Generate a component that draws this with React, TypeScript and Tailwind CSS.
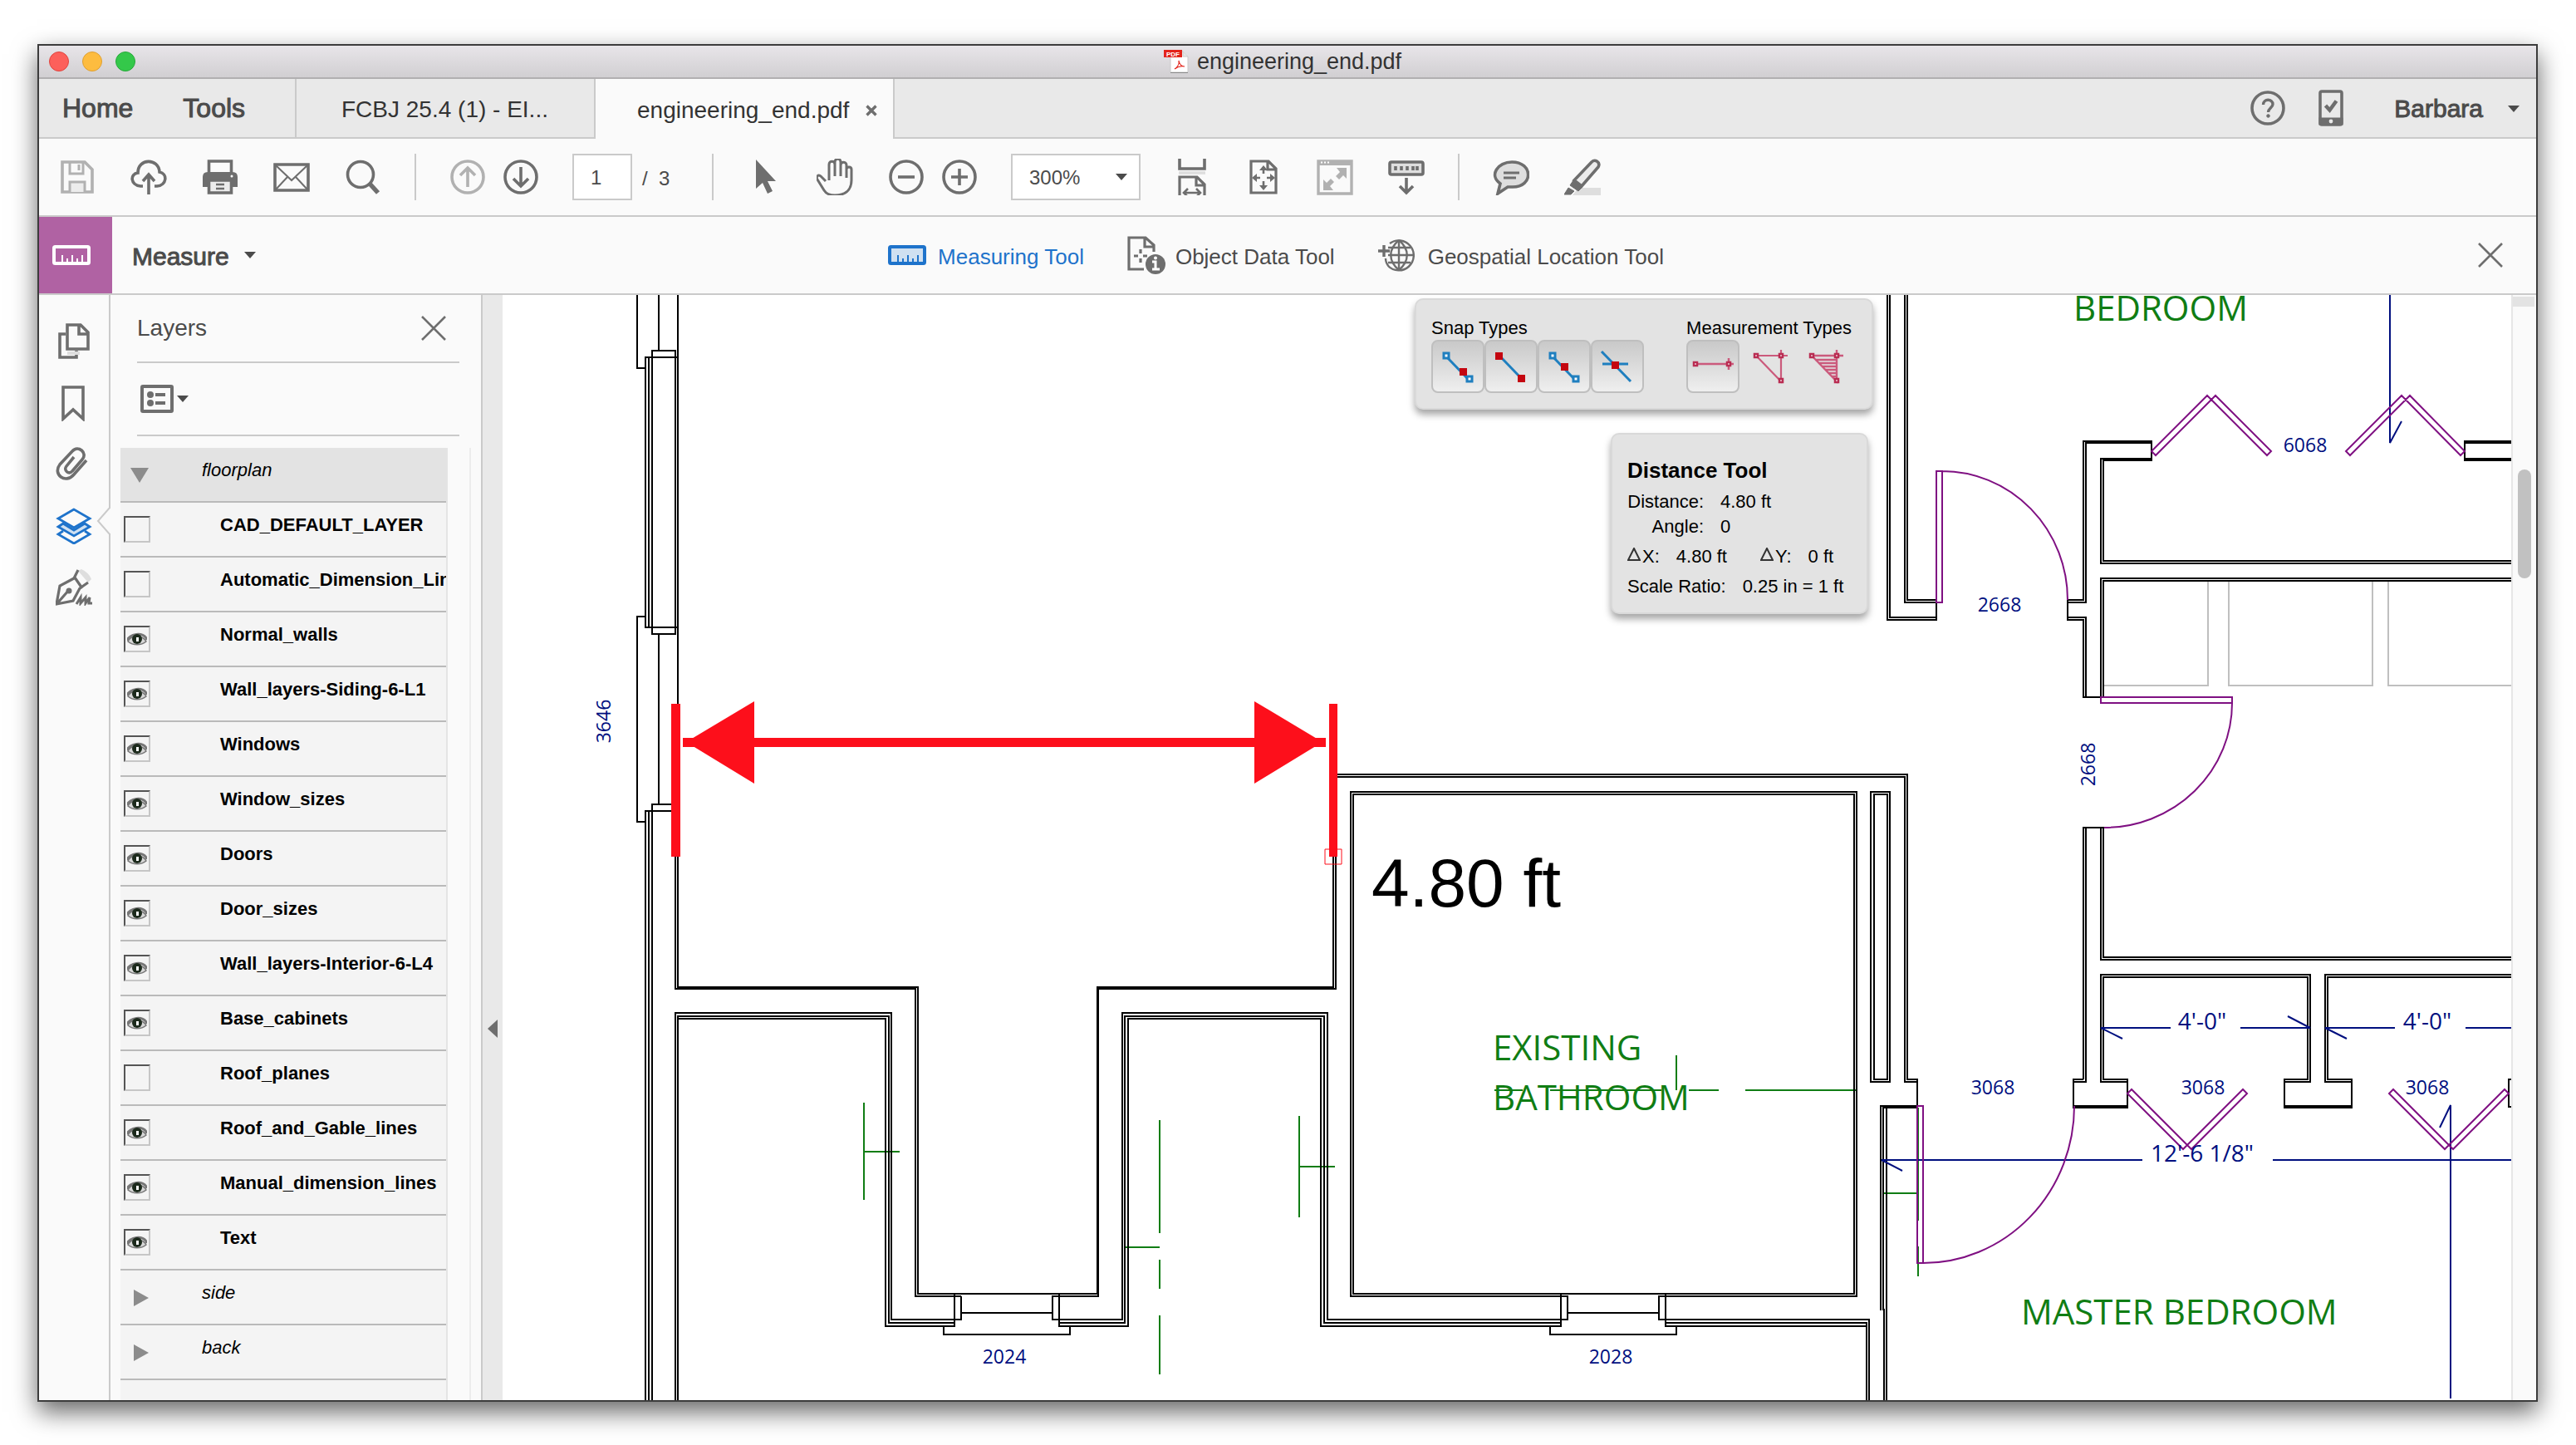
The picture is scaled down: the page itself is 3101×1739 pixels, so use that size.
import { useState } from "react";
import type { ReactNode } from "react";

interface Layer {
  name: string;
  visible: boolean;
}

const INITIAL_LAYERS: Layer[] = [
  { name: "CAD_DEFAULT_LAYER", visible: false },
  { name: "Automatic_Dimension_Lin", visible: false },
  { name: "Normal_walls", visible: true },
  { name: "Wall_layers-Siding-6-L1", visible: true },
  { name: "Windows", visible: true },
  { name: "Window_sizes", visible: true },
  { name: "Doors", visible: true },
  { name: "Door_sizes", visible: true },
  { name: "Wall_layers-Interior-6-L4", visible: true },
  { name: "Base_cabinets", visible: true },
  { name: "Roof_planes", visible: false },
  { name: "Roof_and_Gable_lines", visible: true },
  { name: "Manual_dimension_lines", visible: true },
  { name: "Text", visible: true },
];

function Icon({ children, faded }: { children: ReactNode; faded?: boolean }) {
  return (
    <svg
      viewBox="0 0 44 44"
      className={faded ? "size-11 text-[#b1b1b1]" : "size-11 text-[#6e6e6e]"}
      fill="none"
      stroke="currentColor"
      strokeWidth={3.6}
    >
      {children}
    </svg>
  );
}

function IconButton({ label, faded, children }: { label: string; faded?: boolean; children: ReactNode }) {
  return (
    <button aria-label={label} className="size-11 shrink-0">
      <Icon faded={faded}>{children}</Icon>
    </button>
  );
}

function Caret({ className }: { className?: string }) {
  return (
    <svg viewBox="0 0 14 8" className={`h-2 w-3.5 fill-[#4b4b4b] ${className ?? ""}`}>
      <path d="M0 0h14l-7 8z" />
    </svg>
  );
}

function Cross() {
  return (
    <svg viewBox="0 0 30 30" className="size-[30px]" fill="none" stroke="#6e6e6e" strokeWidth={2.6}>
      <path d="M1 1l28 28M29 1L1 29" />
    </svg>
  );
}

function Ruler({ className }: { className: string }) {
  return (
    <svg viewBox="0 0 46 24" className={`h-6 w-[46px] ${className}`} stroke="currentColor">
      <rect x="2" y="2" width="42" height="20" rx="1.5" strokeWidth={4} />
      <path fill="none" d="M12 20v-8M18 20v-4M24 20v-8M30 20v-4M36 20v-8" strokeWidth={2} />
    </svg>
  );
}

function Divider() {
  return <div className="mx-10 h-14 w-0.5 shrink-0 bg-[#cacaca]" />;
}

function TitleBar() {
  return (
    <div className="flex h-10 shrink-0 items-center border-b-2 border-[#b1afb1] bg-gradient-to-b from-[#e8e5e9] to-[#d1cfd2] px-3">
      <div className="flex w-[120px] gap-4">
        <button aria-label="Close" className="size-6 rounded-full border border-[#e0443e] bg-[#fc605b]" />
        <button aria-label="Minimize" className="size-6 rounded-full border border-[#dfa032] bg-[#fdbc40]" />
        <button aria-label="Zoom" className="size-6 rounded-full border border-[#27a93a] bg-[#34c84a]" />
      </div>
      <div className="flex flex-1 items-center justify-center gap-2.5">
        <svg viewBox="0 0 30 28" className="h-7 w-[30px]">
          <path d="M8 2h15l6 6v19H8z" fill="#fff" stroke="#c9c9c9" />
          <path d="M23 2v6h6" fill="#e5e5e5" stroke="#c9c9c9" />
          <path d="M8 27.5h21" stroke="#8a8a8a" />
          <rect width="22" height="9" fill="#e3241b" />
          <text x="11" y="7.5" textAnchor="middle" fontSize="8" fontWeight="700" fill="#fff" fontFamily="Liberation Sans, sans-serif">PDF</text>
          <path d="M13 23c3-2 6-6 5-10 1 5 3 7 7 7-4-1-8 0-12 3z" fill="none" stroke="#e3241b" strokeWidth={1.2} />
        </svg>
        <h1 className="text-[27px] leading-8 text-[#333]">engineering_end.pdf</h1>
      </div>
      <div className="w-[132px]" />
    </div>
  );
}

function TabBar() {
  return (
    <div className="flex h-[72px] shrink-0 bg-[#e9e9e9] text-[28px] leading-8 text-[#333]">
      <nav className="flex w-[310px] shrink-0 items-center gap-[60px] border-r-2 border-b-2 border-[#cacaca] pr-10 pl-7 text-[32px] text-[#4b4b4b] [-webkit-text-stroke:1px_#4b4b4b]">
        <a href="#home">Home</a>
        <a href="#tools">Tools</a>
      </nav>
      <button className="flex w-[360px] shrink-0 items-center border-r-2 border-b-2 border-[#cacaca] pt-1 pl-[54px] text-left">
        FCBJ 25.4 (1) - EI...
      </button>
      <div className="flex w-[360px] shrink-0 items-center border-r-2 border-[#cacaca] bg-[#fafafa] pt-1 pl-[50px]">
        <button>engineering_end.pdf</button>
        <button aria-label="Close tab" className="ml-5">
          <svg viewBox="0 0 14 14" className="size-3.5" stroke="#6e6e6e" strokeWidth={3.4}>
            <path d="M1.500 1.500l11 11M12.500 1.500l-11 11" />
          </svg>
        </button>
      </div>
      <div className="flex flex-1 items-center justify-end border-b-2 border-[#cacaca] pr-5">
        <IconButton label="Help">
          <circle cx="22" cy="22" r="19" />
          <path d="M16.500 18c0-7.500 11.500-7.500 11.500-.5 0 4-5.500 4.500-5.500 9.500" strokeWidth={3.400} />
          <circle cx="22.500" cy="31.500" r="1.800" fill="currentColor" strokeWidth={1} />
        </IconButton>
        <button aria-label="Mobile link" className="ml-8">
          <Icon>
            <rect x="9" y="2" width="26" height="40" rx="2" />
            <path d="M9 35h26v6H9z" fill="currentColor" strokeWidth={3} />
            <circle cx="22" cy="38" r="2.400" fill="#e9e9e9" stroke="none" />
            <path d="M15.500 19l5 5.500 8-11" strokeWidth={4.500} />
          </Icon>
        </button>
        <button className="ml-[54px] flex items-center gap-[30px] pt-0.5 text-[30px] text-[#4b4b4b] [-webkit-text-stroke:1px_#4b4b4b]">
          Barbara
          <Caret />
        </button>
      </div>
    </div>
  );
}

function Toolbar() {
  return (
    <div className="flex h-[94px] shrink-0 items-center border-b-2 border-[#cacaca] pl-6 text-2xl text-[#4b4b4b]">
      <div className="flex gap-[42px]">
        <IconButton label="Save" faded>
          <path d="M4 4h27l9 9v27H4z" />
          <path d="M13 4v14h16V4M24 7v7" strokeWidth={3} />
          <path d="M13 40V28h18v12" fill="#ececec" strokeWidth={3} />
        </IconButton>
        <IconButton label="Upload">
          <path d="M15 33h-3C0 32-1 18 9 17 9-1 34-1 35 16c10 2 9 16-3 17h-3" />
          <path d="M22 43V21M15 27l7-8 7 8" />
        </IconButton>
        <IconButton label="Print">
          <path d="M7 16h30q6 0 6 6v12h-6v-8H7v8H1V22q0-6 6-6z" fill="currentColor" stroke="none" />
          <path d="M8.500 16V3h27v13" />
          <path d="M8.500 26h27v15h-27z" fill="#ececec" />
          <path d="M17 31h10M17 36h10" strokeWidth={2.500} />
          <circle cx="36" cy="21" r="1.500" fill="#fff" stroke="none" />
        </IconButton>
        <IconButton label="Email">
          <path d="M2 7h40v31H2z" />
          <path d="M3 8l19 18L41 8M3 37l14-15M41 37L27 22" strokeWidth={2} />
        </IconButton>
        <IconButton label="Search">
          <circle cx="19" cy="19" r="15.500" />
          <path d="M30 30l10 11" strokeWidth={5.500} />
        </IconButton>
      </div>
      <Divider />
      <div className="flex gap-5">
        <IconButton label="Previous page" faded>
          <circle cx="22" cy="22" r="19" />
          <path d="M22 34V12M13 20l9-9 9 9" />
        </IconButton>
        <IconButton label="Next page">
          <circle cx="22" cy="22" r="19" />
          <path d="M22 10v22M13 24l9 9 9-9" />
        </IconButton>
      </div>
      <input
        aria-label="Page number"
        defaultValue="1"
        className="ml-10 h-14 w-[72px] shrink-0 border-2 border-[#cacaca] bg-white pt-0.5 pl-5 text-[#4b4b4b] outline-none"
      />
      <span className="ml-3 w-11 shrink-0 pt-1 whitespace-pre">/  3</span>
      <Divider />
      <IconButton label="Select">
        <path d="M11 1v35l8-7 6 13 6-3-6-12h10z" fill="currentColor" stroke="none" />
      </IconButton>
      <button aria-label="Hand" className="ml-10 size-11 shrink-0">
        <Icon>
          <path
            d="M11 27L5 21c-3-3-6 1-4 4l8 13c3 5 7 6 13 6 12 0 20-6 20-18V13c0-4-6-4-6 0v10V8c0-5-7-5-7 0v13V4c0-5-7-5-7 0v17V7c0-5-7-5-7 0v19"
            strokeWidth={3}
          />
        </Icon>
      </button>
      <div className="ml-[42px] flex gap-5">
        <IconButton label="Zoom out">
          <circle cx="22" cy="22" r="19" />
          <path d="M12 22h20" />
        </IconButton>
        <IconButton label="Zoom in">
          <circle cx="22" cy="22" r="19" />
          <path d="M12 22h20M22 12v20" />
        </IconButton>
      </div>
      <div className="ml-10 grid shrink-0 items-center">
        <select
          aria-label="Zoom level"
          className="col-start-1 row-start-1 h-14 w-[156px] appearance-none border-2 border-[#cacaca] bg-white pt-0.5 pl-5 text-[#4b4b4b] outline-none"
        >
          <option>300%</option>
        </select>
        <Caret className="pointer-events-none col-start-1 row-start-1 mr-4 justify-self-end" />
      </div>
      <div className="ml-10 flex gap-[42px]">
        <IconButton label="Fit width">
          <path d="M7 -2v14h30V-2" />
          <path d="M6 17h32" stroke="#dedede" />
          <path d="M7 46V22h21l9 9v15M27 22v10h10" strokeWidth={3.200} />
          <path d="M12 41h20M17 36l-5 5 5 5M27 36l5 5-5 5" strokeWidth={2.600} />
        </IconButton>
        <IconButton label="Fit page">
          <path d="M7 3h21l9 9v29H7zM27 3v10h10" strokeWidth={3.200} />
          <path d="M22 10v8M22 27v8M10 23h8M26 23h8" strokeWidth={2.600} />
          <path d="M22 8l5 6H17zM22 38l5-6H17zM8 23l6-5v10zM36 23l-6-5v10z" fill="currentColor" stroke="none" />
        </IconButton>
        <IconButton label="Full screen" faded>
          <path d="M2 3h40v39H2z" strokeWidth={3.400} />
          <path d="M1 2h42v6H1z" fill="currentColor" stroke="none" />
          <path d="M5 4.500h12" stroke="#fff" strokeWidth={2} strokeDasharray="2 2" />
          <path d="M36 11v13l-4-4-5 5-4-4 5-5-4-5zM8 38V25l4 4 5-5 4 4-5 5 4 5z" fill="currentColor" stroke="none" />
        </IconButton>
        <IconButton label="Read mode">
          <rect x="2" y="4" width="40" height="15" rx="2" fill="#dedede" />
          <path d="M9 9v5M16 9v5M23 9v5M30 9v5M35 9v5" />
          <path d="M22 23v18M14 33l8 8 8-8" />
        </IconButton>
      </div>
      <Divider />
      <div className="flex gap-[42px]">
        <IconButton label="Comment">
          <path d="M23 4c26 0 26 30 1 30h-6l-12 8 3-12C-5 20 6 4 23 4z" fill="#dedede" />
          <path d="M13 17h19M13 23h15" strokeWidth={3} />
        </IconButton>
        <IconButton label="Highlight">
          <path d="M17 35h27v9H10z" fill="#dedede" stroke="none" />
          <path d="M12 26L33 4c4-4 11 0 8 6L21 33z" fill="#ececec" />
          <path d="M11 26l11 8-5 5-10-7zM5 35l7 4-4 4H0z" fill="currentColor" strokeWidth={1} />
        </IconButton>
      </div>
    </div>
  );
}

function MeasureBar() {
  return (
    <div className="flex h-[94px] shrink-0 items-center border-b-2 border-[#cacaca] text-[26px] leading-8 text-[#4b4b4b]">
      <div className="flex w-[340px] shrink-0 items-center">
        <div className="flex h-[92px] w-[88px] items-center bg-[#b062a3] pl-4">
          <Ruler className="fill-none text-white" />
        </div>
        <button className="ml-6 flex items-center gap-[18px] pt-1 text-[30px] [-webkit-text-stroke:1px_#4b4b4b]">
          Measure
          <Caret className="mb-1" />
        </button>
      </div>
      <div className="flex flex-1 items-center justify-center gap-[52px]">
        <button className="flex items-center gap-[14px] text-[#1e73cb]">
          <Ruler className="fill-[#cfe0f1]" />
          <span className="pt-1">Measuring Tool</span>
        </button>
        <button className="flex items-center gap-3">
          <svg viewBox="0 0 46 46" className="size-[46px] text-[#6e6e6e]" fill="none" stroke="currentColor" strokeWidth={3.2}>
            <path d="M20 40H2V2h20l10 9v8M21 2v11h11" />
            <path d="M16 16v5M16 27v5M8 24h5M19 24h5" />
            <circle cx="34" cy="34" r="12" fill="currentColor" stroke="none" />
            <path d="M30 31h4v9M30 40h9" stroke="#fff" strokeWidth={3} />
            <circle cx="34" cy="26.500" r="2" fill="#fff" stroke="none" />
          </svg>
          <span className="pt-1">Object Data Tool</span>
        </button>
        <button className="flex items-center gap-4">
          <svg viewBox="0 0 44 40" className="h-10 w-11 text-[#6e6e6e]" fill="none" stroke="currentColor" strokeWidth={2.4}>
            <path d="M14 6a18 18 0 1 1-2 27M9 24q0 6 5 11" />
            <path d="M25 2v36M12 20h31M12 11h27M12 29h27" />
            <path d="M25 2c-13 11-13 25 0 36M25 2c13 11 13 25 0 36" />
            <path d="M0 15h14M7 8v14" strokeWidth={3.400} />
          </svg>
          <span className="pt-1">Geospatial Location Tool</span>
        </button>
      </div>
      <div className="flex w-[368px] shrink-0 justify-end pr-10">
        <button aria-label="Close Measure">
          <Cross />
        </button>
      </div>
    </div>
  );
}

function NavStrip() {
  return (
    <nav className="flex w-[86px] shrink-0 flex-col items-center gap-[30px] border-r-2 border-[#cacaca] pt-[34px]">
      <IconButton label="Page thumbnails">
        <path d="M12 13H5v28h20v-8" />
        <path d="M14 34h15v4H14z" fill="#dedede" stroke="none" />
        <path d="M14 2h16l9 9v20H14zM28 2v11h11" />
      </IconButton>
      <IconButton label="Bookmarks">
        <path d="M9 3h24v38L21 30 9 41z" />
      </IconButton>
      <IconButton label="Attachments">
        <path d="M37 17L22 34C12 46-4 34 5 22L20 6c7-8 19 2 12 10L20 30c-4 5-11-1-7-6l9-11" />
      </IconButton>
      <div className="relative flex w-full justify-center text-[#1e73cb]">
        <button aria-label="Layers">
          <svg viewBox="0 0 44 44" className="size-11" fill="none" stroke="currentColor" strokeWidth={2.8}>
            <path d="M9 28l-6 4 19 11 19-11-6-4" />
            <path d="M9 19l-6 4 19 11 19-11-6-4-13 8z" fill="#cfe0f1" />
            <path d="M22 2L3 13l19 11 19-11z" fill="#fafafa" />
          </svg>
        </button>
        <svg viewBox="0 0 17 32" className="absolute top-0 -right-0.5 h-8 w-[17px]">
          <path d="M17 1v30h-2L2 16 15 1z" fill="#fafafa" />
          <path d="M16 0L2 16l14 16" fill="none" stroke="#cacaca" strokeWidth={2} />
        </svg>
      </div>
      <IconButton label="Signatures">
        <path d="M27 2l12 14 4-4Q40 4 31 0z" fill="#dedede" stroke="none" />
        <path d="M27 1l-5 10L5 20 1 42l20-4 8-15 10-7M23 10l9 13M2 41l14-16" strokeWidth={3.200} />
        <circle cx="16" cy="26" r="3.500" fill="currentColor" stroke="none" />
        <path d="M25 42l5-8v7l6-7v7l5-7-1 7h4" strokeWidth={3} />
      </IconButton>
    </nav>
  );
}

function Eye() {
  return (
    <svg viewBox="0 0 24 16" className="pointer-events-none col-start-1 row-start-1 hidden h-4 w-6 justify-self-center peer-checked:block">
      <path d="M0 10C2 2 20-2 24 9" fill="none" stroke="#777" strokeWidth={3} />
      <path d="M1 11C4 4 18 2 23 11 17 16 7 16 1 11z" fill="#d8d8d8" stroke="#777" strokeWidth={1.5} />
      <circle cx="12" cy="8" r="6" fill="#1c2a1c" />
      <rect x="11" y="6" width="3" height="5" fill="#fff" />
    </svg>
  );
}

function GroupRow({ name, open }: { name: string; open?: boolean }) {
  return (
    <button
      className={`flex h-[66px] w-full shrink-0 border-b-2 border-[#bababa] pl-3 text-left italic ${open ? "bg-[#e3e3e3]" : "bg-[#f4f4f4]"}`}
    >
      <svg viewBox="0 0 22 20" className="mt-[23px] h-5 w-[22px] fill-[#8c8c8c]">
        <path d={open ? "M0 1h22L11 19z" : "M4 0v20l18-10z"} />
      </svg>
      <span className="mt-[15px] ml-16">{name}</span>
    </button>
  );
}

function LayersPanel() {
  const [layers, setLayers] = useState(INITIAL_LAYERS);

  const toggle = (name: string) =>
    setLayers((prev) => prev.map((l) => (l.name === name ? { ...l, visible: !l.visible } : l)));

  return (
    <aside className="flex w-[448px] shrink-0 flex-col border-r-2 border-[#cacaca] pr-3 pl-3">
      <div className="mr-3.5 ml-5 flex h-[82px] shrink-0 items-center justify-between border-b-2 border-[#cacaca] pr-4">
        <h2 className="text-[28px] leading-8 text-[#4b4b4b]">Layers</h2>
        <button aria-label="Close Layers">
          <Cross />
        </button>
      </div>
      <div className="mr-3.5 mb-3.5 ml-5 flex h-[88px] shrink-0 items-center border-b-2 border-[#cacaca] pl-1">
        <button aria-label="Layer options" className="flex items-center gap-1">
          <svg viewBox="0 0 40 34" className="h-[34px] w-10 text-[#6e6e6e]" fill="none" stroke="currentColor" strokeWidth={4}>
            <rect x="2" y="2" width="36" height="30" rx="1" />
            <path d="M18 12h12M18 22h12" />
            <circle cx="12" cy="12" r="4" fill="currentColor" stroke="none" />
            <circle cx="12" cy="22" r="4" fill="currentColor" stroke="none" />
          </svg>
          <Caret />
        </button>
      </div>
      <div className="flex min-h-0 flex-1 border-r-2 border-[#ececec] pr-[26px] text-[22px] leading-6 text-black">
        <div className="flex w-[394px] flex-col overflow-hidden border-r-2 border-[#e4e4e4] bg-[#f4f4f4]">
          <GroupRow name="floorplan" open />
          {layers.map((layer) => (
            <div key={layer.name} className="flex h-[66px] shrink-0 border-b-2 border-[#bababa] pl-1">
              <div className="mt-4 grid size-8 shrink-0 items-center">
                <input
                  id={layer.name}
                  type="checkbox"
                  checked={layer.visible}
                  onChange={() => toggle(layer.name)}
                  className="peer col-start-1 row-start-1 size-8 appearance-none border-2 border-t-[#555] border-r-[#c6c6c6] border-b-[#c6c6c6] border-l-[#555]"
                />
                <Eye />
              </div>
              <label htmlFor={layer.name} className="mt-[15px] ml-[84px] font-bold">
                {layer.name}
              </label>
            </div>
          ))}
          <GroupRow name="side" />
          <GroupRow name="back" />
        </div>
      </div>
    </aside>
  );
}

const WALLS = [
  // west wall and its windows
  "M767 355V443H777M793 355V422M816 355V1188H1105V1557H1321V1188H1605V935",
  "M777 430V755M781 430V755M785 422V763H813V422H784M776 430H817M776 755H817",
  "M777 742H767V989H777M793 763V968M785 1685V968H813V1190H1102V1560H1157M777 1685V976H816M781 976V1685",
  // alcove
  "M813 1685V1219H1073V1588H1157V1560M816 1685V1223H1070V1592H1149M816 1226H1066V1596H1149V1557",
  "M1157 1580H1267M1136 1596V1606H1288V1596",
  "M1322 1190V1560H1267V1588H1351V1219H1598V1588H1887V1560H1626V953H2235V1560H1997V1588H2250V1685",
  "M1320 1190H1608V932M1275 1557V1596H1358V1226H1590V1596H1879V1557",
  "M1275 1592H1354V1223H1594V1592H1879M2005 1592H2247V1685M2247 1596H2005V1557",
  // bathroom
  "M1629 956H2232V1557H1629zM1887 1580H1997M1866 1596V1606H2018V1596",
  "M1608 932H2296V1299H2308M1608 935H2293V1302H2308M2308 1298V1333M2252 953H2275V1302H2252zM2256 956H2272V1299H2256z",
  "M2264 1577V1331H2308M2267 1577V1333H2308M2271 1333V1685M2268 1575V1685",
  // hall
  "M2272 355V746H2331V722H2296V355M2275 355V743H2331M2293 355V725H2331",
  "M2590 531H2508V722H2489V746H2508V839H2532M2590 533H2511V725H2489M2489 743H2511V839M2590 530V555",
  "M2590 552H2529V678H3023M2590 554H2532V675H3023M3023 696H2529V839M3023 699H2532V839",
  "M3023 531H2967V554H3023M3023 533H2967M3023 552H2967",
  // closets
  "M2508 1299V996H2532V1152H3023M2511 996V1302H2496M2529 996V1155H3023M2508 1299H2496V1333H2561V1299H2532V1176H2778V1299H2750V1333H2831V1299H2802V1176H3023",
  "M2561 1302H2529V1173H2781V1302H2750M2831 1302H2799V1173H3023M2496 1331H2561M2750 1331H2831M3023 1299H3020V1332H3023",
].join("");

const NOTES = [
  "M1040 1327V1444M1040 1386H1083M1396 1348V1484M1396 1516V1551M1396 1583V1654M1355 1501H1396M1564 1343V1465M1564 1404H1607",
  "M1799 1312H1833M1866 1312H2000M2033 1312H2069M2101 1312H2236M2018 1270V1312M2267 1436H2307M2309 1333V1469M2309 1500V1536",
].join("");

const DOORS = [
  "M2331 567H2338V725H2331zM2338 567A151 155 0 0 1 2489 722",
  "M2529 839H2687V846H2529zM2687 846A154 150 0 0 1 2533 996",
  "M2308 1331H2315V1520H2308zM2497 1331A182 189 0 0 1 2315 1520",
  "M2657 476L2590 543L2595 548L2667 476L2734 543L2729 548z",
  "M2891 476L2824 543L2829 548L2901 476L2967 543L2962 548z",
  "M2566 1311L2561 1316L2628 1383L2700 1311L2705 1316L2638 1383z",
  "M2881 1311L2876 1316L2943 1383L3015 1311L3020 1316L2953 1383z",
].join("");

const DIMENSIONS = [
  "M2877 355V533L2891 507M2613 1237H2529L2555 1250M2697 1237H2781L2754 1223M2883 1237H2799L2825 1250M2968 1237H3023",
  "M2579 1396H2265L2290 1409M2736 1396H3023M2950 1683V1330L2937 1357",
].join("");

const SIZE_LABELS = [
  { text: "2024", x: 1209, y: 1641 },
  { text: "2028", x: 1939, y: 1641 },
  { text: "6068", x: 2775, y: 544 },
  { text: "2668", x: 2407, y: 736 },
  { text: "3068", x: 2399, y: 1317 },
  { text: "3068", x: 2652, y: 1317 },
  { text: "3068", x: 2922, y: 1317 },
];

function FloorPlan() {
  return (
    <svg
      viewBox="605 355 2418 1330"
      className="block h-[1330px] w-[2418px] font-['Open_Sans','Noto_Sans',sans-serif]"
      fill="none"
      strokeWidth={2}
    >
      <path d="M2533 825H2658V700M2683 700V825H2856V700M2875 700V825H3023" stroke="#bfbfbf" />
      <path d={NOTES} stroke="#107d14" />
      <path d={WALLS} stroke="#000" />
      <path d={DIMENSIONS} stroke="#000f7f" />
      <path d={DOORS} stroke="#7f1082" />

      <g fill="#107d14" fontSize={42}>
        <text x="2496" y="386">BEDROOM</text>
        <text x="1797" y="1276">EXISTING</text>
        <text x="1797" y="1336">BATHROOM</text>
        <text x="2433" y="1594">MASTER BEDROOM</text>
      </g>
      <g fill="#000f7f" fontSize={23} textAnchor="middle">
        {SIZE_LABELS.map((l) => (
          <text key={`${l.x}-${l.y}`} x={l.x} y={l.y}>{l.text}</text>
        ))}
        <text transform="translate(2522 920) rotate(-90)">2668</text>
        <text transform="translate(735 868) rotate(-90)">3646</text>
      </g>
      <g fill="#000f7f" fontSize={28} textAnchor="middle">
        <text x="2651" y="1239">4'-0"</text>
        <text x="2922" y="1239">4'-0"</text>
        <text x="2651" y="1398">12'-6 1/8"</text>
      </g>

      {/* measured distance */}
      <g fill="#fd0f1b">
        <path d="M808 847h11v184h-11zM1600 847h10v184h-10zM822 888h774v11H822z" />
        <path d="M826 893L908 844V943zM1592 893L1510 844V943z" />
        <path d="M1595 1022h20v18h-20z" fill="none" stroke="#fd0f1b" strokeWidth={1} />
      </g>
      <text x="1651" y="1091" fontSize={82} fill="#000" fontFamily="Liberation Sans, Arial, sans-serif">4.80 ft</text>
    </svg>
  );
}

function ToolChoice({ label, active, children }: { label: string; active?: boolean; children: ReactNode }) {
  return (
    <button
      aria-label={label}
      className={`size-16 rounded-lg ${active ? "border-2 border-[#bfbfbf] bg-gradient-to-b from-[#c9c9c9] to-[#efefef]" : "border-2 border-transparent"}`}
    >
      <svg viewBox="0 0 60 60" className="size-full" fill="none" strokeWidth={3}>
        {children}
      </svg>
    </button>
  );
}

function SnapPanel() {
  return (
    <div className="absolute top-1 right-[768px] flex h-[134px] w-[552px] justify-between rounded-[10px] border-2 border-[#d9d9d9] bg-[#e3e3e3] px-[18px] pt-5 text-[22px] leading-7 text-black shadow-[0_6px_8px_rgba(0,0,0,0.35)]">
      <div>
        <p>Snap Types</p>
        <div className="flex">
          <ToolChoice label="Snap to paths" active>
            <path d="M16 18l26 27" stroke="#1f7fbf" />
            <path d="M13 14h6v6h-6zM41 42h6v6h-6z" fill="#fff" stroke="#1f7fbf" />
            <path d="M32 32h9v9h-9z" fill="#c40610" />
          </ToolChoice>
          <ToolChoice label="Snap to endpoints" active>
            <path d="M16 17l26 27" stroke="#1f7fbf" />
            <path d="M11 13h9v9h-9zM38 40h9v9h-9z" fill="#c40610" />
          </ToolChoice>
          <ToolChoice label="Snap to midpoints" active>
            <path d="M16 18l26 27" stroke="#1f7fbf" />
            <path d="M13 14h6v6h-6zM41 42h6v6h-6z" fill="#fff" stroke="#1f7fbf" />
            <path d="M26 26h9v9h-9z" fill="#c40610" />
          </ToolChoice>
          <ToolChoice label="Snap to intersections" active>
            <path d="M11 12l35 36M12 27h31" stroke="#1f7fbf" />
            <path d="M23 24h9v9h-9z" fill="#c40610" />
          </ToolChoice>
        </div>
      </div>
      <div className="pr-1.5">
        <p>Measurement Types</p>
        <div className="flex gap-0.5">
          <ToolChoice label="Distance" active>
            <path d="M9 27h46M49 20v14" stroke="#cb5a7c" strokeWidth={2.500} />
            <path d="M7 25h4v4H7zM47 25h4v4h-4z" fill="#fff" stroke="#b92c52" strokeWidth={2.500} />
          </ToolChoice>
          <ToolChoice label="Perimeter">
            <path d="M16 17h38M46 10v38L16 17" stroke="#cb5a7c" strokeWidth={2.200} />
            <path d="M14 15h4v4h-4zM44 15h4v4h-4zM44 45h4v4h-4z" fill="#fff" stroke="#b92c52" strokeWidth={2.500} />
          </ToolChoice>
          <ToolChoice label="Area">
            <path d="M17 17h38M47 10v38L17 17M21 22h26M25 26h22M29 30h18M33 34h14M37 38h10M41 42h6" stroke="#cb5a7c" strokeWidth={2.400} />
            <path d="M15 15h4v4h-4zM45 15h4v4h-4zM45 45h4v4h-4z" fill="#fff" stroke="#b92c52" strokeWidth={2.500} />
          </ToolChoice>
        </div>
      </div>
    </div>
  );
}

function Delta() {
  return (
    <svg viewBox="0 0 16 16" className="mt-1 mr-0.5 size-4" fill="none" stroke="#333" strokeWidth={2}>
      <path d="M8 1l7 14H1z" />
    </svg>
  );
}

function DistancePanel() {
  return (
    <div className="absolute top-[166px] right-[774px] h-[218px] w-[310px] rounded-[10px] border-2 border-[#d9d9d9] bg-[#e3e3e3] px-[18px] pt-7 text-[22px] leading-[30px] whitespace-nowrap text-black shadow-[0_6px_8px_rgba(0,0,0,0.35)]">
      <h2 className="text-[26px] leading-[30px] font-bold">Distance Tool</h2>
      <p className="mt-2 flex gap-5">
        <span className="w-[92px] text-right">Distance:</span>
        <span>4.80 ft</span>
      </p>
      <p className="flex gap-5">
        <span className="w-[92px] text-right">Angle:</span>
        <span>0</span>
      </p>
      <div className="mt-1.5 flex">
        <Delta />
        <span>X:</span>
        <span className="mr-10 ml-5">4.80 ft</span>
        <Delta />
        <span>Y:</span>
        <span className="ml-5">0 ft</span>
      </div>
      <p className="mt-1.5 flex gap-5">
        <span>Scale Ratio:</span>
        <span>0.25 in = 1 ft</span>
      </p>
    </div>
  );
}

export default function App() {
  return (
    <div className="flex h-screen flex-col bg-white pt-[53px] pr-[46px] pb-[52px] pl-[45px] font-['Liberation_Sans',Arial,sans-serif]">
      <div className="flex min-h-0 flex-1 flex-col overflow-hidden border-2 border-[#3c3c3c] bg-[#fafafa] shadow-[0_12px_28px_rgba(0,0,0,0.6)]">
        <TitleBar />
        <TabBar />
        <Toolbar />
        <MeasureBar />
        <div className="flex min-h-0 flex-1">
          <NavStrip />
          <LayersPanel />
          <div className="flex w-6 shrink-0 flex-col items-center bg-[#e9e9e9]">
            <div className="grow-2" />
            <button aria-label="Collapse panel">
              <svg viewBox="0 0 12 22" className="h-[22px] w-3 fill-[#6e6e6e]">
                <path d="M12 0v22L0 11z" />
              </svg>
            </button>
            <div className="grow" />
          </div>
          <main className="relative min-w-0 flex-1 overflow-hidden bg-white">
            <FloorPlan />
            <SnapPanel />
            <DistancePanel />
          </main>
          <div className="w-[30px] shrink-0 border-l-2 border-[#e6e6e6] pt-0.5">
            <div className="h-3 w-[26px] bg-[#e3e3e3]" />
            <div className="mt-[196px] ml-1.5 h-[131px] w-4 rounded-full bg-[#c1c1c1]" />
          </div>
        </div>
      </div>
    </div>
  );
}
